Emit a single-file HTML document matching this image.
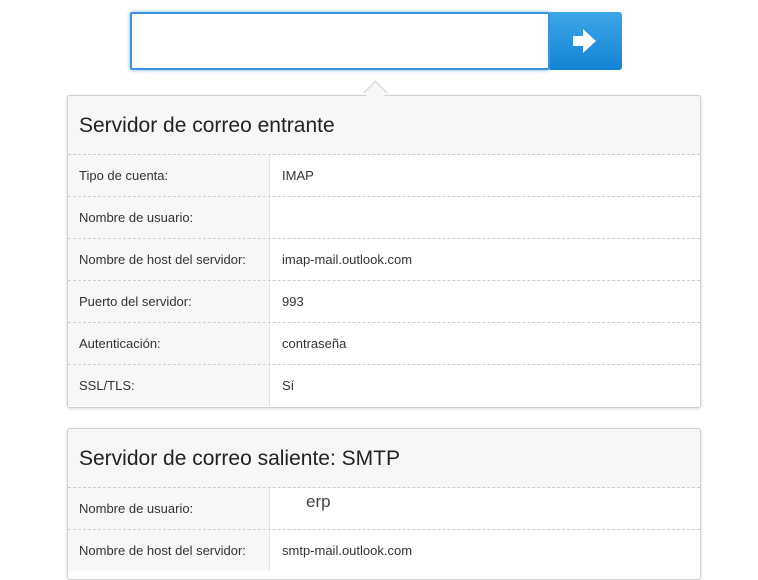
<!DOCTYPE html>
<html><head><meta charset="utf-8"><style>
body{margin:0;width:758px;height:564px;overflow:hidden;background:#fff;font-family:"Liberation Sans",sans-serif;position:relative}
.inp{position:absolute;left:130px;top:12px;width:416px;height:54px;border:2px solid #3b93e0;border-radius:2px;box-shadow:0 0 4px #7ab8f0;background:#fff}
.btn{position:absolute;left:550px;top:12px;width:72px;height:58px;background:linear-gradient(#3ea6e8,#1383d4);border-radius:0 3px 3px 0}
.panel{position:absolute;left:67px;width:632px;border:1px solid #cfcfcf;border-radius:3px;box-shadow:0 1px 3px rgba(0,0,0,.15);background:#fff;overflow:hidden}
.h{height:58px;background:#f7f7f7;border-bottom:1px dashed #ccc;font-size:21px;color:#222;line-height:60px;padding-left:11px}
.r{height:41px;border-bottom:1px dashed #ccc;display:flex;font-size:13px;color:#333;line-height:41px}
.r:last-child{border-bottom:none}
.l{width:190px;padding-left:11px;background:#f7f7f7;border-right:1px solid #e2e2e2}
.v{padding-left:12px}
.arrow{position:absolute;left:367px;top:84px;width:16px;height:16px;background:#f7f7f7;border-left:1px solid #cfcfcf;border-top:1px solid #cfcfcf;transform:rotate(45deg)}
</style></head><body>
<div class="inp"></div>
<div class="btn"><svg width="72" height="58"><path d="M23 24h10v-7l13 12-13 12v-7H23z" fill="#fff"/></svg></div>
<div class="panel" style="top:95px;height:311px">
<div class="h">Servidor de correo entrante</div>
<div class="r"><div class="l">Tipo de cuenta:</div><div class="v">IMAP</div></div>
<div class="r"><div class="l">Nombre de usuario:</div><div class="v"></div></div>
<div class="r"><div class="l">Nombre de host del servidor:</div><div class="v">imap-mail.outlook.com</div></div>
<div class="r"><div class="l">Puerto del servidor:</div><div class="v">993</div></div>
<div class="r"><div class="l">Autenticación:</div><div class="v">contraseña</div></div>
<div class="r"><div class="l">SSL/TLS:</div><div class="v">Sí</div></div>
</div>
<div class="arrow"></div>
<div class="panel" style="top:428px;height:150px">
<div class="h">Servidor de correo saliente: SMTP</div>
<div class="r"><div class="l">Nombre de usuario:</div><div class="v" style="font-size:17px;line-height:28px;color:#444;padding-left:36px">erp</div></div>
<div class="r"><div class="l">Nombre de host del servidor:</div><div class="v">smtp-mail.outlook.com</div></div>
</div>
</body></html>
